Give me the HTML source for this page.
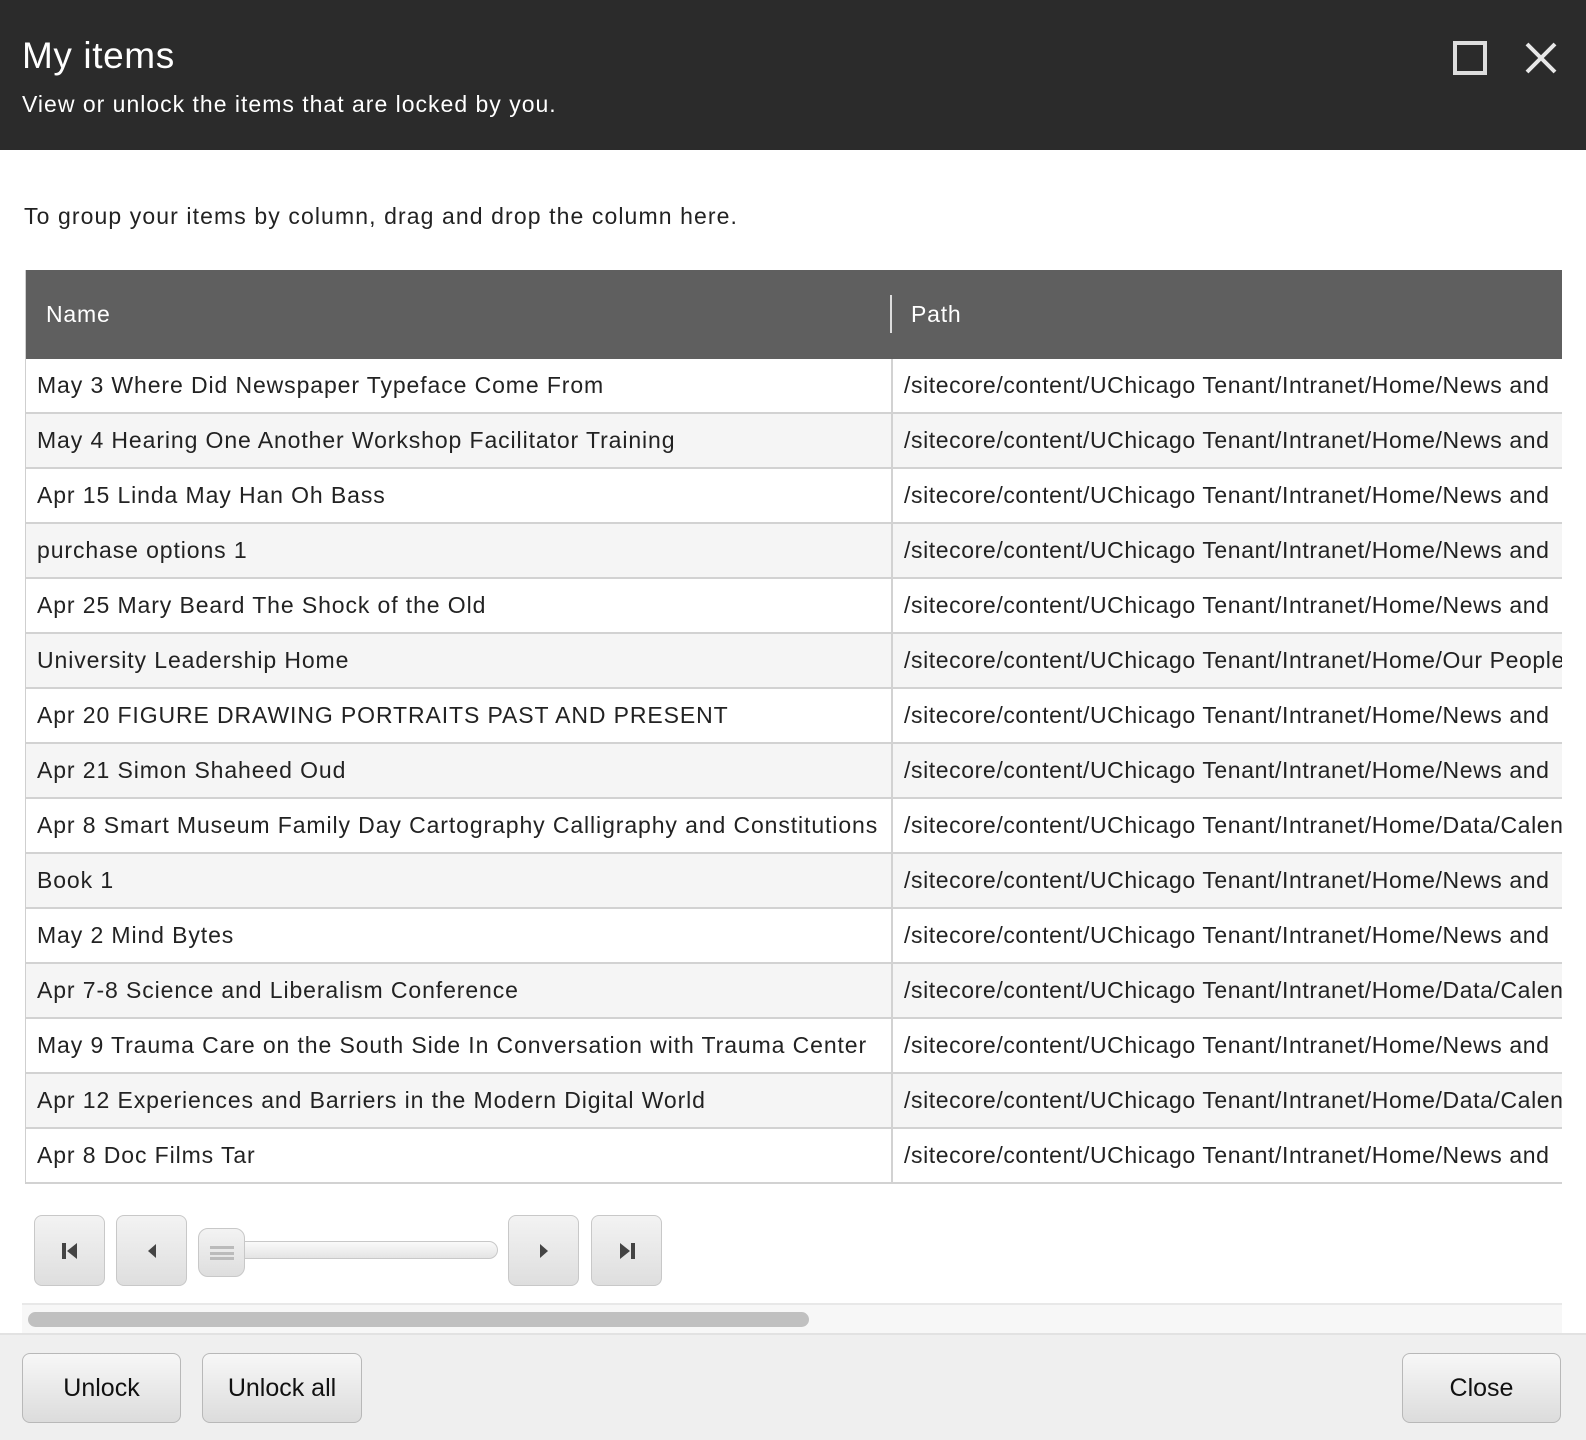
<!DOCTYPE html>
<html><head><meta charset="utf-8"><style>
*{box-sizing:border-box;margin:0;padding:0}
body{width:1586px;height:1440px;background:#fff;font-family:"Liberation Sans","DejaVu Sans",sans-serif;position:relative;overflow:hidden;color:#222}
.hdr{position:absolute;left:0;top:0;width:1586px;height:150px;background:#2b2b2b;color:#fff}
.hdr h1{position:absolute;left:22px;top:35px;font-size:37px;font-weight:normal;letter-spacing:0.6px}
.hdr p{position:absolute;left:22px;top:91px;font-size:23px;letter-spacing:1px}
.grp{position:absolute;left:24px;top:203px;font-size:23px;letter-spacing:1.1px}
.tbl{position:absolute;left:25px;top:270px;width:1537px;border-left:1px solid #cfcfcf}
.th{height:89px;background:#5f5f5f;color:#fff;font-size:23px;position:relative;letter-spacing:0.8px}
.th span{position:absolute;top:31px}
.th i{position:absolute;left:864px;top:25px;width:2px;height:38px;background:#ddd}
.r{height:55px;border-bottom:2px solid #d2d2d2;position:relative;font-size:23px;white-space:nowrap;overflow:hidden;letter-spacing:0.9px}
.r:nth-child(even){background:#f5f5f5}
.r .a{position:absolute;left:11px;top:13px}
.r .b{position:absolute;left:865px;top:0;bottom:0;border-left:2px solid #d2d2d2;width:700px;padding-left:11px;padding-top:13px;overflow:hidden;letter-spacing:0.6px}
.pb{position:absolute;top:1215px;width:71px;height:71px;border:1px solid #c8c8c8;border-radius:8px;background:linear-gradient(#f3f3f3,#dedede)}
.pb svg{position:absolute;left:25px;top:25px}
.btn{position:absolute;top:1353px;height:70px;border:1px solid #b8b8b8;border-radius:8px;background:linear-gradient(#f7f7f7,#dcdcdc);font-size:25px;text-align:center;line-height:68px;color:#111}
</style></head><body>
<div class="hdr"><h1>My items</h1><p>View or unlock the items that are locked by you.</p>
<svg style="position:absolute;left:1452px;top:40px" width="36" height="36"><rect x="3" y="3" width="30" height="30" fill="none" stroke="#ddd" stroke-width="4"/></svg>
<svg style="position:absolute;left:1523px;top:40px" width="36" height="36"><path d="M4 4L32 32M32 4L4 32" stroke="#e8e8e8" stroke-width="4"/></svg>
</div>
<div class="grp">To group your items by column, drag and drop the column here.</div>
<div class="tbl">
<div class="th"><span style="left:20px">Name</span><i></i><span style="left:885px">Path</span></div>
<div>
<div class="r"><span class="a">May 3 Where Did Newspaper Typeface Come From</span><span class="b">/sitecore/content/UChicago Tenant/Intranet/Home/News and</span></div>
<div class="r"><span class="a">May 4 Hearing One Another Workshop Facilitator Training</span><span class="b">/sitecore/content/UChicago Tenant/Intranet/Home/News and</span></div>
<div class="r"><span class="a">Apr 15 Linda May Han Oh Bass</span><span class="b">/sitecore/content/UChicago Tenant/Intranet/Home/News and</span></div>
<div class="r"><span class="a">purchase options 1</span><span class="b">/sitecore/content/UChicago Tenant/Intranet/Home/News and</span></div>
<div class="r"><span class="a">Apr 25 Mary Beard The Shock of the Old</span><span class="b">/sitecore/content/UChicago Tenant/Intranet/Home/News and</span></div>
<div class="r"><span class="a">University Leadership Home</span><span class="b">/sitecore/content/UChicago Tenant/Intranet/Home/Our People</span></div>
<div class="r"><span class="a">Apr 20 FIGURE DRAWING PORTRAITS PAST AND PRESENT</span><span class="b">/sitecore/content/UChicago Tenant/Intranet/Home/News and</span></div>
<div class="r"><span class="a">Apr 21 Simon Shaheed Oud</span><span class="b">/sitecore/content/UChicago Tenant/Intranet/Home/News and</span></div>
<div class="r"><span class="a">Apr 8 Smart Museum Family Day Cartography Calligraphy and Constitutions</span><span class="b">/sitecore/content/UChicago Tenant/Intranet/Home/Data/Calendar</span></div>
<div class="r"><span class="a">Book 1</span><span class="b">/sitecore/content/UChicago Tenant/Intranet/Home/News and</span></div>
<div class="r"><span class="a">May 2 Mind Bytes</span><span class="b">/sitecore/content/UChicago Tenant/Intranet/Home/News and</span></div>
<div class="r"><span class="a">Apr 7-8 Science and Liberalism Conference</span><span class="b">/sitecore/content/UChicago Tenant/Intranet/Home/Data/Calendar</span></div>
<div class="r"><span class="a">May 9 Trauma Care on the South Side In Conversation with Trauma Center</span><span class="b">/sitecore/content/UChicago Tenant/Intranet/Home/News and</span></div>
<div class="r"><span class="a">Apr 12 Experiences and Barriers in the Modern Digital World</span><span class="b">/sitecore/content/UChicago Tenant/Intranet/Home/Data/Calendar</span></div>
<div class="r"><span class="a">Apr 8 Doc Films Tar</span><span class="b">/sitecore/content/UChicago Tenant/Intranet/Home/News and</span></div>
</div></div>
<div class="pb" style="left:34px"><svg width="20" height="20"><rect x="2" y="2" width="4" height="16" fill="#444"/><path d="M17 2L7 10L17 18Z" fill="#444"/></svg></div>
<div class="pb" style="left:116px"><svg width="20" height="20"><path d="M14 3L6 10L14 17Z" fill="#444"/></svg></div>
<div style="position:absolute;left:230px;top:1241px;width:268px;height:18px;border:1px solid #c8c8c8;border-radius:9px;background:linear-gradient(#fafafa,#e4e4e4)"></div>
<div style="position:absolute;left:198px;top:1228px;width:47px;height:49px;border:1px solid #c8c8c8;border-radius:10px;background:linear-gradient(#f3f3f3,#dedede)"><div style="position:absolute;left:11px;top:17px;width:24px;height:14px;border-top:3px solid #bbb;border-bottom:3px solid #bbb"><div style="margin-top:3px;height:3px;background:#bbb"></div></div></div>
<div class="pb" style="left:508px"><svg width="20" height="20"><path d="M6 3L14 10L6 17Z" fill="#444"/></svg></div>
<div class="pb" style="left:591px"><svg width="20" height="20"><path d="M3 2L13 10L3 18Z" fill="#444"/><rect x="14" y="2" width="4" height="16" fill="#444"/></svg></div>
<div style="position:absolute;left:22px;top:1303px;width:1540px;height:30px;background:#f7f7f7;border-top:2px solid #e8e8e8"></div>
<div style="position:absolute;left:28px;top:1312px;width:781px;height:15px;border-radius:8px;background:#c0c0c0"></div>
<div style="position:absolute;left:0;top:1333px;width:1586px;height:107px;background:#efefef;border-top:2px solid #e2e2e2"></div>
<div class="btn" style="left:22px;width:159px">Unlock</div>
<div class="btn" style="left:202px;width:160px">Unlock all</div>
<div class="btn" style="left:1402px;width:159px">Close</div>
</body></html>
